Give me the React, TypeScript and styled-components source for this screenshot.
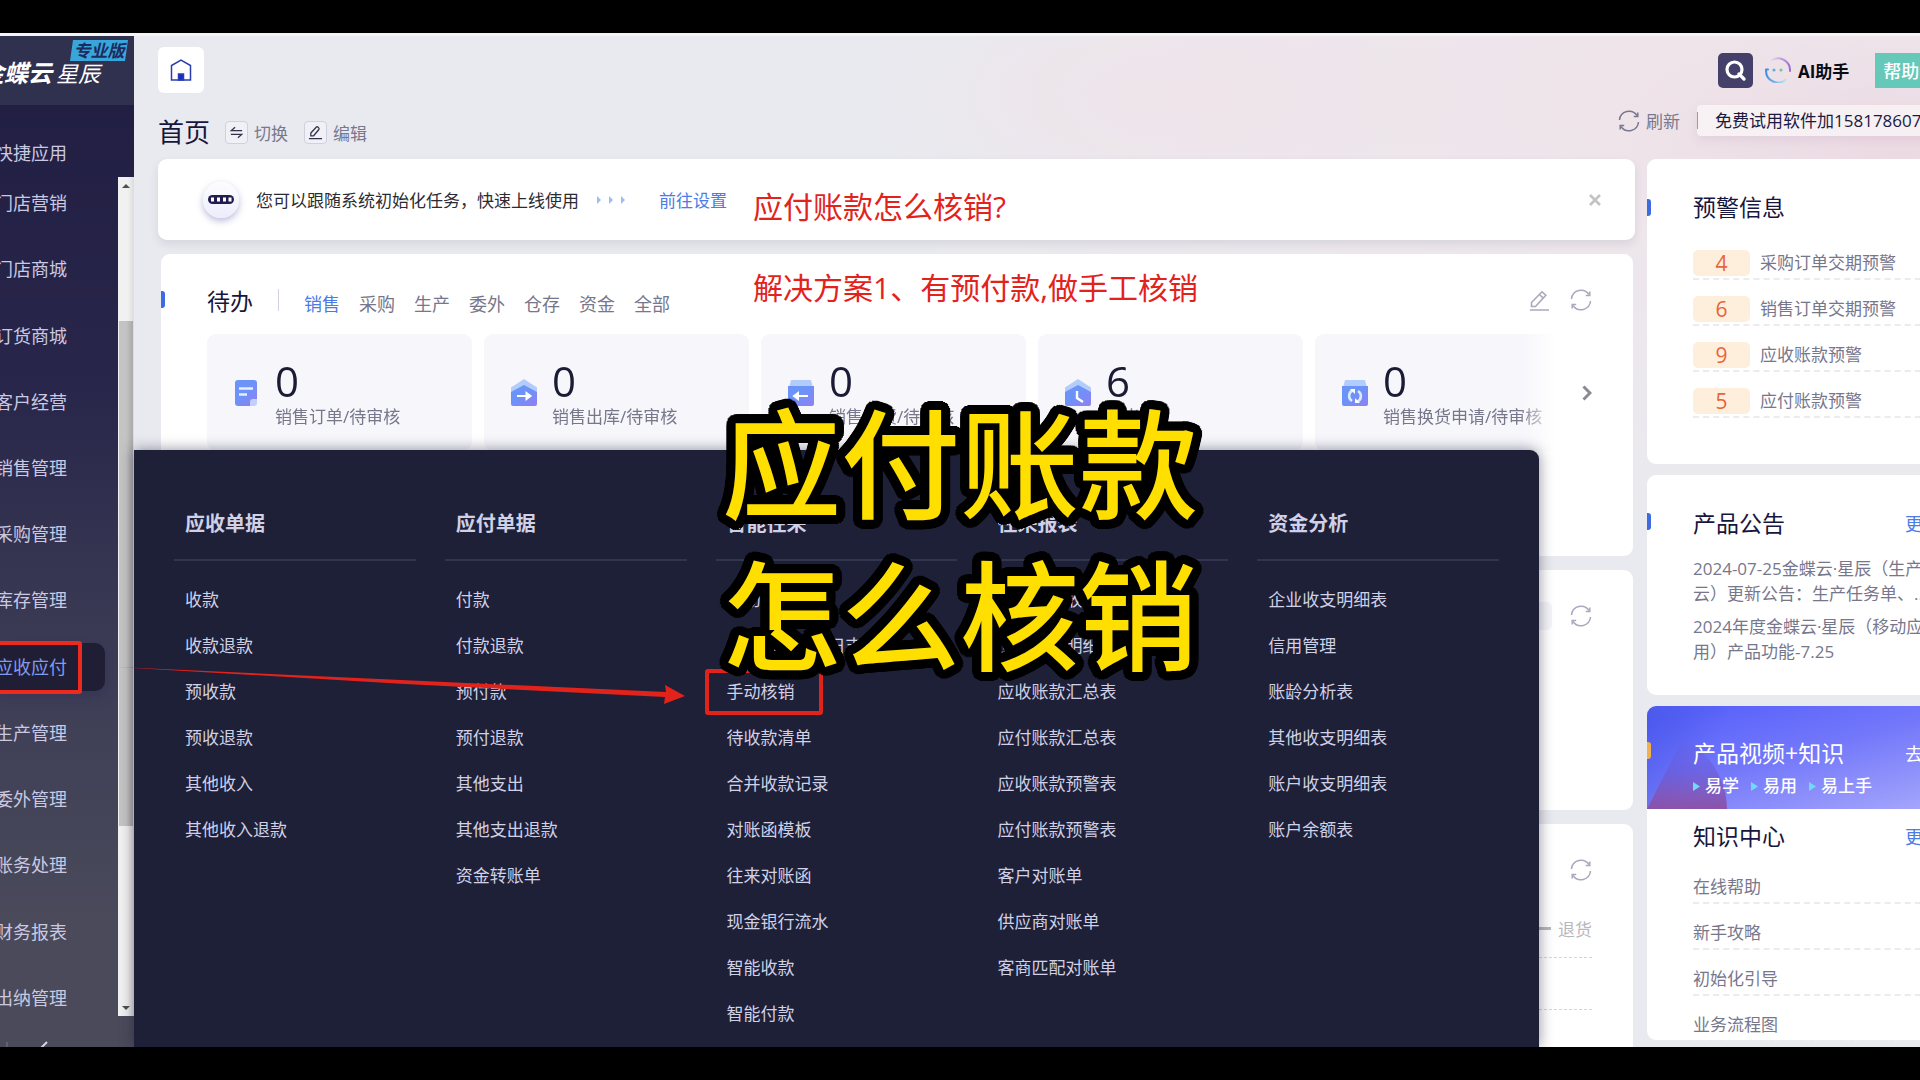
import React from 'react';
import styled, { createGlobalStyle, css } from 'styled-components';

const Global = createGlobalStyle`
  * { box-sizing: border-box; }
  body { margin: 0; background: #000; }
  body, button, input { font-family: "Open Sans", "Noto Sans CJK SC", sans-serif; }
  button { border: 0; padding: 0; background: none; cursor: pointer; color: inherit; font-size: inherit; }
  a { color: inherit; text-decoration: none; }
  h1, h2, h3, p, ul { margin: 0; padding: 0; font-weight: 400; list-style: none; }
  svg { display: block; flex: none; }
`;

const Frame = styled.div`
  height: 100vh;
  padding: 33px 0;
  background: #000;
`;

const Stage = styled.div`
  position: relative;
  display: flex;
  height: 100%;
  overflow: hidden;
  border-top: 3px solid #f4f4f7;
  background:
    radial-gradient(ellipse 300px 120px at 1180px 60px, rgba(241, 226, 233, 0.6), transparent),
    radial-gradient(ellipse 300px 160px at 1900px 120px, rgba(236, 208, 220, 0.55), transparent),
    radial-gradient(ellipse 800px 420px at 1660px 60px, rgba(239, 228, 234, 1), transparent),
    #e9eaef;
`;

/* ---------- sidebar ---------- */

const Sidebar = styled.aside`
  display: flex;
  flex-direction: column;
  flex: none;
  width: 134px;
  overflow: hidden;
  color: #c9c9e2;
  font-size: 18px;
  background: linear-gradient(#211d42 0%, #28264a 35%, #3b3b55 60%, #4a4a5b 88%, #4a4a5a 100%);
`;

const Brand = styled.div`
  position: relative;
  display: flex;
  align-items: center;
  gap: 4px;
  height: 69px;
  padding-top: 2px;
  margin-left: -20px;
  background: #30304f;
  color: #fff;
  font-size: 22px;
  font-style: italic;
  white-space: nowrap;

  strong { font-size: 24px; }
`;

const Edition = styled.span`
  position: absolute;
  top: 4px;
  right: 6px;
  width: 58px;
  line-height: 21px;
  text-align: center;
  color: #1c2b5c;
  font-size: 17px;
  font-weight: 700;
  background: #38a6dd;
  clip-path: polygon(3px 0, 100% 0, 55px 100%, 0 100%);
`;

const Shortcut = styled.a`
  margin: 31px 0 0 -5px;
  line-height: 34px;
  white-space: nowrap;
`;

const NavArea = styled.div`
  display: flex;
  flex: 1;
  min-height: 0;
`;

const NavList = styled.ul`
  display: grid;
  flex: 1;
  grid-auto-rows: 1fr;
  align-items: center;
`;

const NavLink = styled.a<{ $active?: boolean }>`
  position: relative;
  display: block;
  margin-right: 13px;
  line-height: 48px;
  text-indent: -5px;
  white-space: nowrap;
  border-radius: 0 10px 10px 0;
  ${(p) => p.$active && css`
    color: #7f9bf0;
    background: #201e35;
    box-shadow: 0 4px 12px rgba(45, 45, 90, 0.6);
  `}
`;

const NavMark = styled.span`
  position: absolute;
  inset: -2px 23px -3px -5px;
  border: 4px solid #ee2a1e;
  border-radius: 3px;
`;

const ScrollTrack = styled.div`
  display: flex;
  flex-direction: column;
  width: 16px;
  margin: 7px 0 15px;
  padding: 0 1px;
  background: linear-gradient(90deg, #f1f1f1 60%, #dcdcdc);
`;

const ScrollArrow = styled.button`
  display: grid;
  place-items: center;
  height: 17px;
`;

const ScrollGap = styled.div<{ $grow: number }>`
  flex: ${(p) => p.$grow};
`;

const ScrollThumb = styled.div`
  flex: 505;
  background: linear-gradient(90deg, #c4c4c4 50%, #a9a9a9);
`;

const SideFoot = styled.div`
  height: 16px;
  padding-left: 6px;
`;

/* ---------- workspace ---------- */

const Main = styled.main`
  flex: 1;
  min-width: 0;
  overflow: hidden;
`;

const Workspace = styled.div`
  margin: 0 -67px 0 24px;
`;

const TopBar = styled.header`
  display: flex;
  align-items: center;
  justify-content: space-between;
  padding: 11px 0 0;
`;

const HomeTab = styled.button`
  display: grid;
  place-items: center;
  width: 46px;
  height: 46px;
  border-radius: 6px;
  background: #fff;
`;

const Tools = styled.div`
  display: flex;
  align-items: center;
  width: 269px;
`;

const SearchButton = styled.button`
  display: grid;
  place-items: center;
  width: 35px;
  height: 35px;
  margin-right: 12px;
  border-radius: 5px;
  background: #454069;
`;

const Assistant = styled.button`
  display: flex;
  align-items: center;
  gap: 7px;
  margin-right: 26px;
  color: #0b0b12;
  font-size: 17px;
  font-weight: 700;
`;

const HelpButton = styled.button`
  flex: 1;
  height: 35px;
  padding-left: 8px;
  text-align: left;
  font-size: 18px;
  font-weight: 500;
  color: #fff;
  background: #66c8b8;
`;

const TitleRow = styled.div`
  display: flex;
  align-items: flex-start;
  justify-content: space-between;
  height: 66px;
  padding-top: 12px;
`;

const TitleGroup = styled.div`
  display: flex;
  align-items: center;
  height: 54px;
  gap: 15px;

  h1 { font-size: 26px; color: #17163c; line-height: 54px; }
`;

const SmallAction = styled.button`
  display: flex;
  align-items: center;
  gap: 6px;
  padding-right: 1px;
  color: #78788e;
  font-size: 17px;

  svg {
    padding: 3px;
    border: 1px solid #cfd0e0;
    border-radius: 4px;
    background: #f0f0f6;
  }
`;

const NoticeGroup = styled.div`
  display: flex;
  align-items: center;
  width: 369px;
  height: 31px;
`;

const RefreshAction = styled.button`
  display: flex;
  align-items: center;
  gap: 6px;
  margin-right: 17px;
  color: #78788e;
  font-size: 17px;
`;

const Notice = styled.p`
  flex: 1;
  height: 31px;
  padding-left: 18px;
  line-height: 31px;
  font-size: 17px;
  white-space: nowrap;
  color: #1b1a40;
  border-radius: 4px;
  background: linear-gradient(90deg, #9b98b3, #9b98b3) 0 50% / 1px 17px no-repeat, rgba(255, 255, 255, 0.55);
  box-shadow: 0 5px 10px rgba(160, 130, 160, 0.14);
`;

const Columns = styled.div`
  display: grid;
  grid-template-columns: minmax(0, 1fr) 340px;
  gap: 12px;
`;

const LeftColumn = styled.div`
  display: flex;
  flex-direction: column;
  gap: 14px;
`;

const Banner = styled.section`
  display: flex;
  align-items: center;
  height: 81px;
  padding: 0 34px 0 45px;
  border-radius: 9px;
  background: #fff;
  box-shadow: 0 4px 8px rgba(70, 70, 100, 0.12);
  color: #2b2b33;
  font-size: 17px;

  p { margin: 0 18px 0 17px; }
  a { margin-left: 34px; color: #4a7be6; }
  button { margin-left: auto; }
`;

const RobotBadge = styled.span`
  display: grid;
  place-items: center;
  width: 36px;
  height: 36px;
  border-radius: 50%;
  background: linear-gradient(#fdfdff, #ecedfb);
  box-shadow: 0 3px 7px rgba(80, 90, 170, 0.4);
`;

const Card = styled.section<{ $h?: number }>`
  position: relative;
  ${(p) => p.$h && `height: ${p.$h}px;`}
  border-radius: 9px;
  background: #fff;
`;

const LeftCard = styled(Card)`
  margin: 0 2px 0 3px;
  padding: 24px 41px 0 46px;
`;

const Accent = styled.i<{ $top: number; $color?: string }>`
  position: absolute;
  left: 0;
  top: ${(p) => p.$top}px;
  width: 4px;
  height: 17px;
  border-radius: 0 3px 3px 0;
  background: ${(p) => p.$color || '#3f6be0'};
`;

const CardHead = styled.div`
  display: flex;
  align-items: center;
  height: 44px;

  h2 { font-size: 23px; color: #17163c; }
`;

const Tabs = styled.nav`
  display: flex;
  gap: 19px;
  margin-left: 25px;
  padding: 6px 0 0 26px;
  background: linear-gradient(#d2d2e4, #d2d2e4) 0 50% / 1px 22px no-repeat;
`;

const Tab = styled.a<{ $on?: boolean }>`
  font-size: 18px;
  color: ${(p) => (p.$on ? '#4a7be6' : '#77778c')};
`;

const HeadActions = styled.div`
  display: flex;
  gap: 20px;
  margin-left: auto;
`;

const TileRow = styled.div`
  display: flex;
  align-items: center;
  margin-top: 12px;
`;

const TileStrip = styled.div`
  display: flex;
  flex: 1;
  gap: 12px;
  overflow: hidden;
  margin-right: 22px;
  mask-image: linear-gradient(90deg, #000 calc(100% - 40px), transparent calc(100% - 4px));
`;

const Tile = styled.article`
  display: flex;
  flex: 0 0 265px;
  align-items: center;
  gap: 15px;
  height: 117px;
  padding-left: 27px;
  border-radius: 9px;
  background: #f6f6fb;
  white-space: nowrap;

  strong { display: block; font-weight: 400; font-size: 42px; line-height: 48px; color: #1b1b35; }
  span { display: block; font-size: 17px; line-height: 24px; color: #77778c; }
`;

const Ghost = styled.span`
  position: absolute;
  right: 81px;
  top: 32px;
  width: 40px;
  height: 28px;
  border-radius: 5px;
  background: #f4f4f8;
`;

const Legend = styled.p`
  display: flex;
  align-items: center;
  justify-content: flex-end;
  gap: 7px;
  height: 24px;
  margin: 24px 0 17px;
  color: #b7b7bc;
  font-size: 17px;

  i { width: 20px; height: 3px; background: #b7b7bc; }
`;

const GridLine = styled.div`
  height: 52px;
  border-top: 1px dashed #d5d5d9;
`;

/* ---------- right column ---------- */

const RightColumn = styled.div`
  display: flex;
  flex-direction: column;
  gap: 11px;
`;

const SideCard = styled(Card)<{ $flush?: boolean }>`
  padding: ${(p) => (p.$flush ? '0' : '26px 46px 0')};

  h2 { font-size: 23px; line-height: 44px; color: #17163c; }
`;

const SideHead = styled.div<{ $light?: boolean }>`
  display: flex;
  align-items: center;
  justify-content: space-between;

  h2 { color: ${(p) => (p.$light ? '#fff' : '#17163c')}; }
  a { font-size: 18px; color: ${(p) => (p.$light ? '#fff' : '#4a7be6')}; }
`;

const DashedList = styled.ul`
  li {
    display: flex;
    align-items: flex-end;
    height: 46px;
    border-bottom: 2px dashed #ececf0;
  }
`;

const AlertList = styled(DashedList)`
  margin-top: 5px;
`;

const AlertLink = styled.a`
  display: flex;
  align-items: center;
  gap: 10px;
  margin-bottom: 2px;
  font-size: 17px;
  line-height: 26px;
  color: #77778c;
`;

const Count = styled.span`
  width: 57px;
  border-radius: 5px;
  text-align: center;
  font-size: 21px;
  color: #e8643a;
  background: #fdefdb;
`;

const GuideLink = styled.a`
  font-size: 17px;
  line-height: 30px;
  color: #77778c;
`;

const NewsList = styled.div`
  display: grid;
  gap: 8px;
  margin-top: 11px;
`;

const NewsItem = styled.p`
  font-size: 17px;
  line-height: 25px;
  color: #77778c;
  white-space: nowrap;

  span { display: block; }
`;

const Promo = styled.div`
  position: relative;
  isolation: isolate;
  height: 103px;
  padding: 25px 46px 0;
  border-radius: 9px 9px 0 0;
  color: #fff;
  background:
    linear-gradient(115deg, rgba(60, 80, 220, 0.5), transparent 22%),
    linear-gradient(165deg, #5a63fb 10%, #7378fa 45%, #a3a4fb 90%);

  &::before {
    content: "";
    position: absolute;
    z-index: -1;
    left: 0;
    bottom: 0;
    width: 80px;
    height: 78px;
    border-radius: 0 100% 0 0 / 0 100% 0 0;
    background: linear-gradient(to top, rgba(140, 80, 165, 0.95), rgba(105, 90, 215, 0.6) 50%, transparent);
    clip-path: polygon(0 100%, 40px 0, 100% 0, 100% 100%);
  }

  h2 { color: #fff; }
`;

const PromoTags = styled.p`
  display: flex;
  gap: 12px;
  font-size: 17px;
  font-weight: 500;
  line-height: 22px;

  span { display: flex; align-items: center; gap: 5px; }
`;

const KnowledgeBody = styled.div`
  padding: 5px 46px 0;
`;

/* ---------- mega menu ---------- */

const MegaMenu = styled.nav`
  position: absolute;
  left: 134px;
  right: 381px;
  top: 414px;
  bottom: 0;
  display: grid;
  grid-template-columns: repeat(5, 1fr);
  gap: 29px;
  padding: 39px 40px 0;
  border-radius: 0 9px 0 0;
  background: #1e2038;
  box-shadow: 0 0 14px rgba(30, 30, 60, 0.5);
  color: #d0d0e6;
`;

const MenuHeading = styled.h3`
  margin-bottom: 16px;
  padding-left: 11px;
  border-bottom: 2px solid #33354f;
  font-size: 20px;
  font-weight: 700;
  line-height: 70px;
`;

const MenuItem = styled.a`
  position: relative;
  display: table;
  padding: 0 11px;
  font-size: 17px;
  line-height: 46px;
`;

const MenuMark = styled.span`
  position: absolute;
  inset: 0 -17px 0 -11px;
  border: 4px solid #e2231c;
  border-radius: 3px;
`;

/* ---------- overlays ---------- */

const RedNote = styled.p<{ $top: number }>`
  position: absolute;
  left: 753px;
  top: ${(p) => p.$top}px;
  font-size: 30px;
  line-height: 44px;
  color: #e2231c;
  white-space: nowrap;
`;

const Arrow = styled.svg`
  position: absolute;
  left: 117px;
  top: 624px;
`;

const OUTLINE = Array.from({ length: 36 }, (_, i) => {
  const a = (i * Math.PI) / 18;
  return `${Math.round(Math.cos(a) * 9)}px ${Math.round(Math.sin(a) * 9)}px 0 #000`;
}).join(', ');

const Caption = styled.p`
  position: absolute;
  inset: 346px 0 auto;
  text-align: center;
  font-family: "Noto Sans CJK SC", sans-serif;
  font-size: 119px;
  font-weight: 500;
  line-height: 152px;
  color: #ffdf00;
  text-shadow: ${OUTLINE};
  pointer-events: none;

  span { display: block; }
`;

/* ---------- icons ---------- */

const RefreshIcon = ({ color = '#a9a9bd' }: { color?: string }) => (
  <svg width="22" height="22" viewBox="0 0 22 22" fill="none" stroke={color} strokeWidth="1.5">
    <path d="M1.5 10A9.6 9.6 0 0 1 19 5.5M20.500 12A9.600 9.600 0 0 1 3 16.500" />
    <path d="M19.800 2.500v4h-4M2.200 19.500v-4h4" />
  </svg>
);

const EditIcon = ({ size = 21, color = '#a9a9bd' }: { size?: number; color?: string }) => (
  <svg width={size} height={size} viewBox="0 0 21 21" fill="none" stroke={color} strokeWidth="1.6">
    <path d="M1 20h19M2.500 16.500v-4L13 1.800l3.800 3.400L6.500 16.500zM10.500 4.500l3.500 3.300" />
  </svg>
);

const PencilIcon = () => (
  <svg width="23" height="23" viewBox="0 0 16 16" fill="none" stroke="#33334d" strokeWidth="1.4">
    <path d="M1 14.500h14M3 11.500V8.500L9 2.200c1-1 3.600 1 2.600 2.600L6 11.500z" />
  </svg>
);

const SwapIcon = () => (
  <svg width="23" height="23" viewBox="0 0 16 16" fill="none" stroke="#33334d" strokeWidth="1.4">
    <path d="M14 6H2.500l4-3.500M2 10h11.500l-4 3.500" />
  </svg>
);

const HomeIcon = () => (
  <svg width="22" height="22" viewBox="0 0 22 22" fill="none" stroke="#2a3cae" strokeWidth="1.5">
    <path d="M1.500 21V6.500L11 1.200l9.500 5.300V21z" />
    <path d="M8.500 15h5v6h-5z" fill="#1430c4" />
  </svg>
);

const AiIcon = () => (
  <svg width="26" height="26" viewBox="0 0 26 26" fill="none" strokeWidth="2" strokeLinecap="round">
    <defs>
      <linearGradient id="aiTop" x1="0" x2="1"><stop offset="0" stopColor="#e4d3ef" /><stop offset="1" stopColor="#a06ad8" /></linearGradient>
      <linearGradient id="aiLow" x1="0" x2="1"><stop offset="0" stopColor="#3d8fe0" /><stop offset="1" stopColor="#c3e6ee" /></linearGradient>
    </defs>
    <path d="M7 3A12 12 0 0 1 25 14" stroke="url(#aiTop)" />
    <path d="M1 13.500A12 12 0 0 0 21 22.500" stroke="url(#aiLow)" />
    <path d="M1 12.500h2" stroke="#3d8fe0" />
    <circle cx="9" cy="13" r="1.600" fill="#5ab3e0" />
    <circle cx="16" cy="13" r="1.600" fill="#6fc7a8" />
  </svg>
);

type TileKind = 'doc' | 'out' | 'back' | 'clock' | 'swap';

const TileIcon = ({ kind }: { kind: TileKind }) => (
  <svg width="26" height="28" viewBox="0 0 26 28" fill="none">
    <defs>
      <linearGradient id={`tile-${kind}`} x1="0" y1="0" x2="1" y2="1">
        <stop offset="0.400" stopColor="#6b93f8" /><stop offset="1" stopColor="#8f80f2" />
      </linearGradient>
    </defs>
    {kind === 'doc' && (
      <>
        <path d="M4 1h16a3 3 0 0 1 3 3v16l-7 7H4a3 3 0 0 1-3-3V4a3 3 0 0 1 3-3z" fill="url(#tile-doc)" />
        <path d="M23 20v4a3 3 0 0 1-3 3h-4v-4a3 3 0 0 1 3-3z" fill="#c3cffc" />
        <path d="M5 9.500h14M5 15.500h8" stroke="#e6edff" strokeWidth="2.400" />
      </>
    )}
    {(kind === 'out' || kind === 'clock') && (
      <>
        <path d="M0 8.500L13 0l13 8.500V16H0z" fill="#b2cdfb" />
        <path d="M0 13L13 6l13 7v12a2 2 0 0 1-2 2H2a2 2 0 0 1-2-2z" fill={`url(#tile-${kind})`} />
      </>
    )}
    {(kind === 'back' || kind === 'swap') && (
      <>
        <path d="M3 1h20l2 8H1z" fill="#b2cdfb" />
        <path d="M0 7h26v18a2 2 0 0 1-2 2H2a2 2 0 0 1-2-2z" fill={`url(#tile-${kind})`} />
      </>
    )}
    {kind === 'out' && <path d="M6 17h11M15.500 14l4 3-4 3z" stroke="#fff" strokeWidth="2" fill="#fff" />}
    {kind === 'back' && <path d="M9 17h11M10 14l-4 3 4 3z" stroke="#fff" strokeWidth="2" fill="#fff" />}
    {kind === 'clock' && <path d="M12 12v7l6 4" stroke="#fff" strokeWidth="2.400" />}
    {kind === 'swap' && (
      <>
        <path d="M10.500 11.500a6 6 0 0 0-.5 10.500M15.500 22.500a6 6 0 0 0 .5-10.500" stroke="#d8ecff" strokeWidth="2.600" />
        <path d="M8 10h5v5zM18 24h-5v-5z" fill="#fff" />
      </>
    )}
  </svg>
);

/* ---------- data ---------- */

const NAV = ['门店营销', '门店商城', '订货商城', '客户经营', '销售管理', '采购管理', '库存管理', '应收应付', '生产管理', '委外管理', '账务处理', '财务报表', '出纳管理'];
const TABS = ['销售', '采购', '生产', '委外', '仓存', '资金', '全部'];

const TILES: { kind: TileKind; count: number; label: string }[] = [
  { kind: 'doc', count: 0, label: '销售订单/待审核' },
  { kind: 'out', count: 0, label: '销售出库/待审核' },
  { kind: 'back', count: 0, label: '销售退货/待审核' },
  { kind: 'clock', count: 6, label: '待出库' },
  { kind: 'swap', count: 0, label: '销售换货申请/待审核' },
];

const ALERTS: [number, string][] = [
  [4, '采购订单交期预警'],
  [6, '销售订单交期预警'],
  [9, '应收账款预警'],
  [5, '应付账款预警'],
];

const GUIDES = ['在线帮助', '新手攻略', '初始化引导', '业务流程图'];

const MENU: { title: string; items: string[] }[] = [
  { title: '应收单据', items: ['收款', '收款退款', '预收款', '预收退款', '其他收入', '其他收入退款'] },
  { title: '应付单据', items: ['付款', '付款退款', '预付款', '预付退款', '其他支出', '其他支出退款', '资金转账单'] },
  { title: '智能往来', items: ['自动核销', '自动核销执行日志', '手动核销', '待收款清单', '合并收款记录', '对账函模板', '往来对账函', '现金银行流水', '智能收款', '智能付款'] },
  { title: '往来报表', items: ['往来单位收付表', '应付账款明细表', '应收账款汇总表', '应付账款汇总表', '应收账款预警表', '应付账款预警表', '客户对账单', '供应商对账单', '客商匹配对账单'] },
  { title: '资金分析', items: ['企业收支明细表', '信用管理', '账龄分析表', '其他收支明细表', '账户收支明细表', '账户余额表'] },
];

/* ---------- page ---------- */

export default function App() {
  return (
    <Frame>
      <Global />
      <Stage>
        <Sidebar>
          <Brand>
            <strong>金蝶云</strong>
            <span>星辰</span>
            <Edition>专业版</Edition>
          </Brand>
          <Shortcut href="#">快捷应用</Shortcut>
          <NavArea>
            <NavList>
              {NAV.map((name) => (
                <li key={name}>
                  <NavLink href="#" $active={name === '应收应付'}>
                    {name}
                    {name === '应收应付' && <NavMark />}
                  </NavLink>
                </li>
              ))}
            </NavList>
            <ScrollTrack>
              <ScrollArrow aria-label="向上滚动">
                <svg width="8" height="4"><path d="M0 4l4-4 4 4z" fill="#505050" /></svg>
              </ScrollArrow>
              <ScrollGap $grow={127} />
              <ScrollThumb />
              <ScrollGap $grow={173} />
              <ScrollArrow aria-label="向下滚动">
                <svg width="8" height="4"><path d="M0 0l4 4 4-4z" fill="#505050" /></svg>
              </ScrollArrow>
            </ScrollTrack>
          </NavArea>
          <SideFoot>
            <svg width="46" height="24" fill="none">
              <path d="M1 11v12" stroke="#77778a" />
              <path d="M41 11l-9 9 9 9" stroke="#d5d5e2" strokeWidth="2" />
            </svg>
          </SideFoot>
        </Sidebar>

        <Main>
          <Workspace>
            <TopBar>
              <HomeTab aria-label="首页"><HomeIcon /></HomeTab>
              <Tools>
                <SearchButton aria-label="搜索">
                  <svg width="21" height="21" fill="none" stroke="#fff" strokeWidth="3.200">
                    <circle cx="9.500" cy="9.500" r="7.500" /><path d="M14 14l5 5" strokeLinecap="round" />
                  </svg>
                </SearchButton>
                <Assistant><AiIcon />AI助手</Assistant>
                <HelpButton>帮助中心</HelpButton>
              </Tools>
            </TopBar>

            <TitleRow>
              <TitleGroup>
                <h1>首页</h1>
                <SmallAction><SwapIcon />切换</SmallAction>
                <SmallAction><PencilIcon />编辑</SmallAction>
              </TitleGroup>
              <NoticeGroup>
                <RefreshAction><RefreshIcon color="#78788e" />刷新</RefreshAction>
                <Notice>免费试用软件加15817860770</Notice>
              </NoticeGroup>
            </TitleRow>

            <Columns>
              <LeftColumn>
                <Banner>
                  <RobotBadge>
                    <svg width="26" height="10">
                      <rect width="26" height="9" rx="4.500" fill="#221c50" />
                      <path d="M3 4.500h3M9 4.500h3M15 4.500h3M20.500 4.500h3" stroke="#fff" strokeWidth="4" />
                    </svg>
                  </RobotBadge>
                  <p>您可以跟随系统初始化任务，快速上线使用</p>
                  <svg width="28" height="8" fill="#9dbcf5"><path d="M0 0l4 4-4 4zM12 0l4 4-4 4zM24 0l4 4-4 4z" /></svg>
                  <a href="#">前往设置</a>
                  <button aria-label="关闭">
                    <svg width="12" height="12" stroke="#c3c3c6" strokeWidth="2.600"><path d="M1 1l10 10M11 1L1 11" /></svg>
                  </button>
                </Banner>

                <LeftCard $h={302}>
                  <Accent $top={37} />
                  <CardHead>
                    <h2>待办</h2>
                    <Tabs>
                      {TABS.map((t, i) => <Tab key={t} href="#" $on={i === 0}>{t}</Tab>)}
                    </Tabs>
                    <HeadActions>
                      <button aria-label="编辑待办"><EditIcon /></button>
                      <button aria-label="刷新待办"><RefreshIcon /></button>
                    </HeadActions>
                  </CardHead>
                  <TileRow>
                    <TileStrip>
                      {TILES.map((t) => (
                        <Tile key={t.label}>
                          <TileIcon kind={t.kind} />
                          <div><strong>{t.count}</strong><span>{t.label}</span></div>
                        </Tile>
                      ))}
                    </TileStrip>
                    <button aria-label="下一组">
                      <svg width="10" height="16" fill="none" stroke="#8b8b8f" strokeWidth="3"><path d="M1.500 1.500L8 8l-6.500 6.500" /></svg>
                    </button>
                  </TileRow>
                </LeftCard>

                <LeftCard $h={240}>
                  <Ghost />
                  <CardHead><HeadActions><button aria-label="刷新图表"><RefreshIcon /></button></HeadActions></CardHead>
                </LeftCard>

                <LeftCard $h={260}>
                  <CardHead><HeadActions><button aria-label="刷新趋势"><RefreshIcon /></button></HeadActions></CardHead>
                  <Legend><i />退货</Legend>
                  <GridLine />
                  <GridLine />
                </LeftCard>
              </LeftColumn>

              <RightColumn>
                <SideCard $h={305}>
                  <Accent $top={40} />
                  <h2>预警信息</h2>
                  <AlertList>
                    {ALERTS.map(([n, label]) => (
                      <li key={label}><AlertLink href="#"><Count>{n}</Count>{label}</AlertLink></li>
                    ))}
                  </AlertList>
                </SideCard>

                <SideCard $h={220}>
                  <Accent $top={38} />
                  <SideHead><h2>产品公告</h2><a href="#">更多</a></SideHead>
                  <NewsList>
                    <NewsItem><span>2024-07-25金蝶云·星辰（生产</span><span>云）更新公告：生产任务单、...</span></NewsItem>
                    <NewsItem><span>2024年度金蝶云·星辰（移动应</span><span>用）产品功能-7.25</span></NewsItem>
                  </NewsList>
                </SideCard>

                <SideCard $flush $h={334}>
                  <Promo>
                    <SideHead $light><h2>产品视频+知识</h2><a href="#">去学</a></SideHead>
                    <PromoTags>
                      {['易学', '易用', '易上手'].map((t) => (
                        <span key={t}>
                          <svg width="7" height="9" fill="#6fdcf5"><path d="M0 0l7 4.500-7 4.500z" /></svg>
                          {t}
                        </span>
                      ))}
                    </PromoTags>
                  </Promo>
                  <Accent $top={36} $color="#f3b04c" />
                  <KnowledgeBody>
                    <SideHead><h2>知识中心</h2><a href="#">更多</a></SideHead>
                    <DashedList>
                      {GUIDES.map((g) => <li key={g}><GuideLink href="#">{g}</GuideLink></li>)}
                    </DashedList>
                  </KnowledgeBody>
                </SideCard>
              </RightColumn>
            </Columns>
          </Workspace>
        </Main>

        <MegaMenu>
          {MENU.map((col) => (
            <div key={col.title}>
              <MenuHeading>{col.title}</MenuHeading>
              {col.items.map((item) => (
                <MenuItem key={item} href="#">
                  {item}
                  {item === '手动核销' && <MenuMark />}
                </MenuItem>
              ))}
            </div>
          ))}
        </MegaMenu>

        <RedNote $top={149}>应付账款怎么核销?</RedNote>
        <RedNote $top={230}>解决方案1、有预付款,做手工核销</RedNote>

        <Arrow width="570" height="50">
          <path d="M0 7L549 32l-1-7 20 11-21 8 1-7-260-13z" fill="#e2231c" />
        </Arrow>

        <Caption><span>应付账款</span><span>怎么核销</span></Caption>
      </Stage>
    </Frame>
  );
}
